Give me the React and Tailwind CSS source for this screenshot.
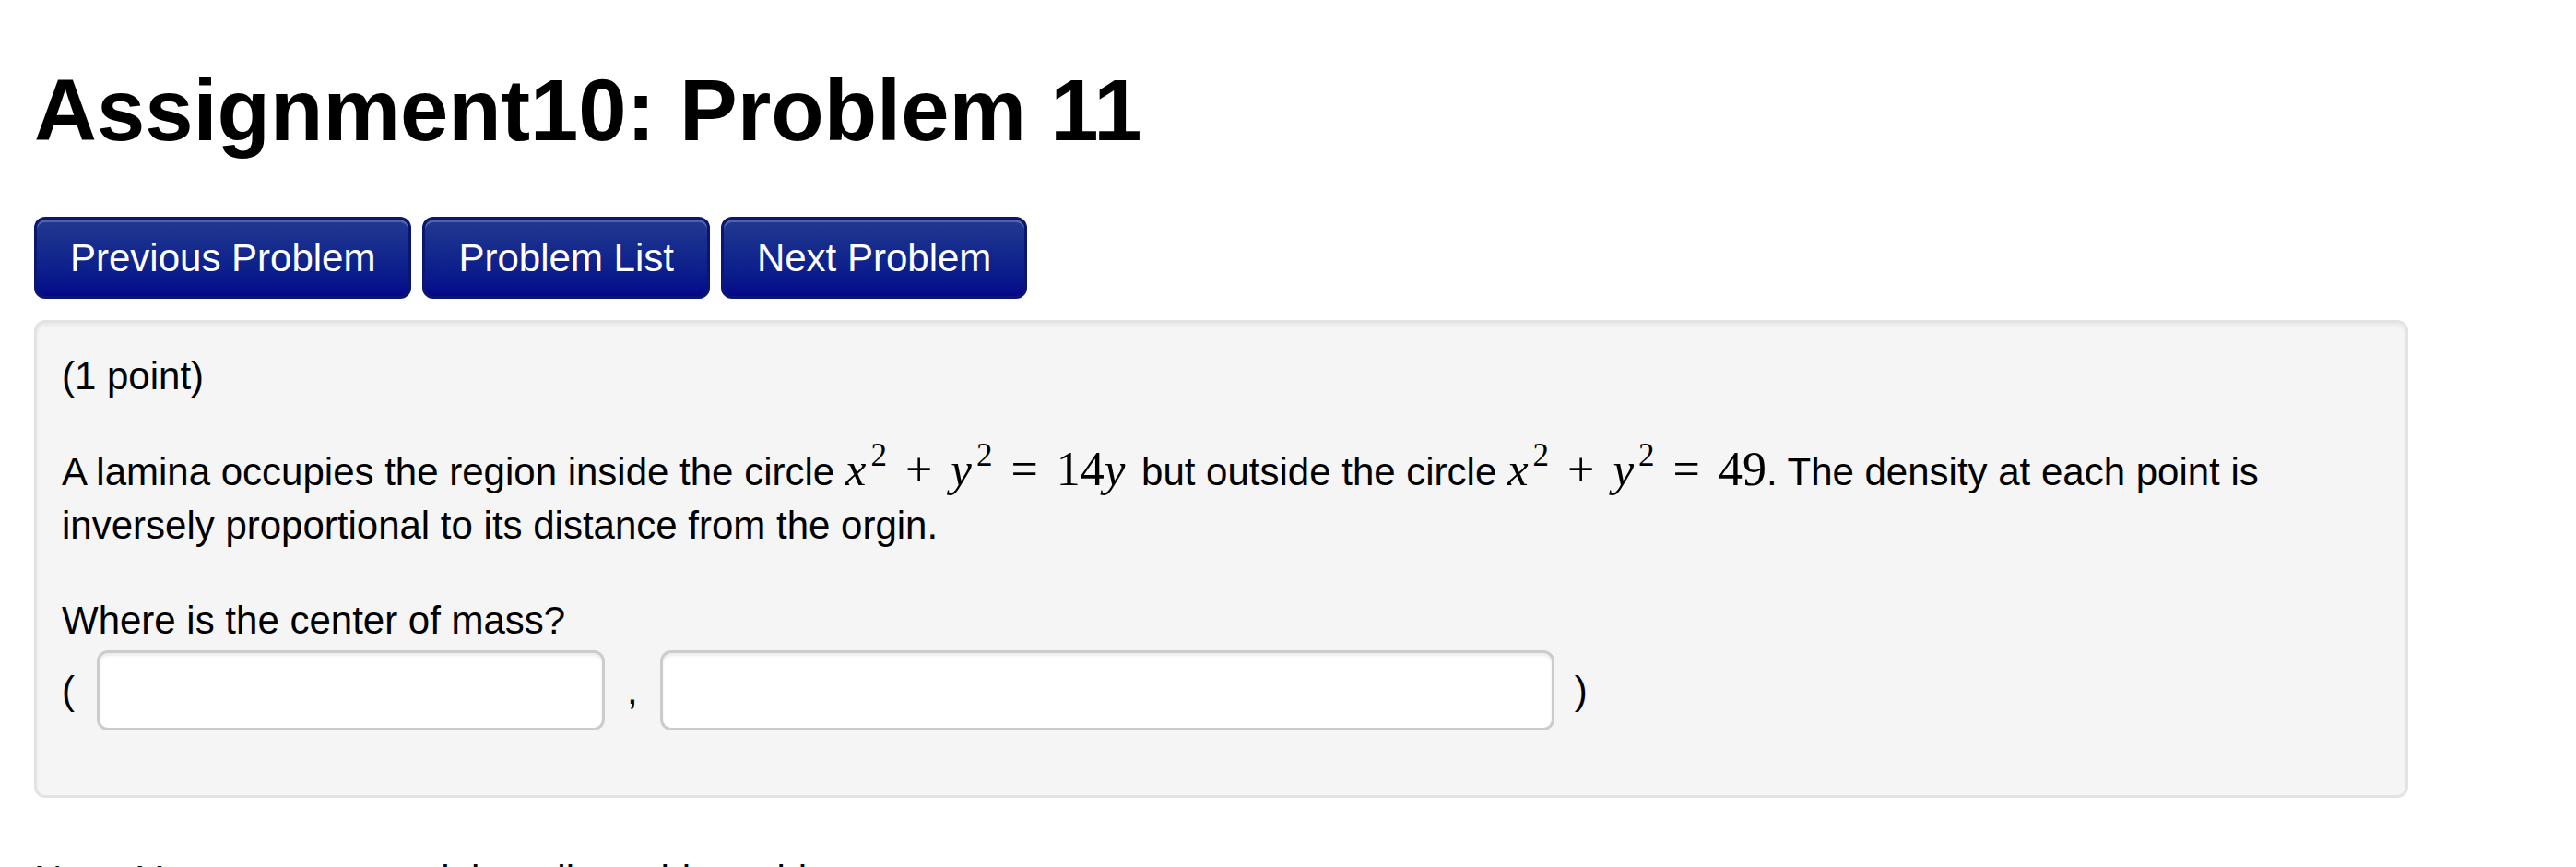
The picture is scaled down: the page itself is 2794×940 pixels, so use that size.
const serif = "font-['Liberation_Serif','Times_New_Roman',serif]"

function V({ children, className = '' }) {
  return <span className={`${serif} italic text-[51px] leading-none ${className}`}>{children}</span>
}

function Sup({ children }) {
  return (
    <span className={`${serif} relative -top-[21px] ml-[5px] text-[35px] leading-none`}>{children}</span>
  )
}

function Op({ children }) {
  return <span className={`${serif} mx-[20px] text-[52px] leading-none`}>{children}</span>
}

function Num({ children }) {
  return <span className={`${serif} text-[52px] leading-none`}>{children}</span>
}

function NavButton({ children }) {
  return (
    <button className="flex h-[89px] items-center rounded-[12px] border-[3px] border-[#0b1670] bg-linear-to-b from-[#22388f] to-[#06068a] px-[36px] text-[42px] leading-[60px] text-white shadow-[inset_0_3px_0_rgba(255,255,255,0.22)]">
      {children}
    </button>
  )
}

export default function App() {
  return (
    <div className="min-h-screen bg-white pl-[37px] pt-[70px] font-['Liberation_Sans',Arial,sans-serif] text-black">
      <h1 className="text-[94px] font-bold leading-[100px]">Assignment10: Problem 11</h1>

      <div className="mt-[65px] flex gap-[12px]">
        <NavButton>Previous Problem</NavButton>
        <NavButton>Problem List</NavButton>
        <NavButton>Next Problem</NavButton>
      </div>

      <div className="mt-[23px] w-[2575px] rounded-[12px] border-[3px] border-[#e3e3e3] bg-[#f5f5f5] pb-[70px] pl-[27px] pt-[29px] text-[42px] leading-[58px] shadow-[inset_0_3px_3px_rgba(0,0,0,0.05)]">
        <div>(1 point)</div>

        <div className="mt-[46px]">
          A lamina occupies the region inside the circle{' '}
          <V>x</V>
          <Sup>2</Sup>
          <Op>+</Op>
          <V>y</V>
          <Sup>2</Sup>
          <Op>=</Op>
          <Num>14</Num>
          <V className="mr-[6px]">y</V> but outside the circle <V>x</V>
          <Sup>2</Sup>
          <Op>+</Op>
          <V>y</V>
          <Sup>2</Sup>
          <Op>=</Op>
          <Num>49</Num>. The density at each point is
          <br />
          inversely proportional to its distance from the orgin.
        </div>

        <div className="mt-[45px]">Where is the center of mass?</div>

        <div className="mt-[3px] flex items-center">
          <span>(</span>
          <input
            type="text"
            className="ml-[24px] h-[87px] w-[551px] rounded-[12px] border-[3px] border-[#cccccc] bg-white shadow-[inset_0_3px_3px_rgba(0,0,0,0.075)] outline-none"
          />
          <span className="mx-[24px]">,</span>
          <input
            type="text"
            className="h-[87px] w-[970px] rounded-[12px] border-[3px] border-[#cccccc] bg-white shadow-[inset_0_3px_3px_rgba(0,0,0,0.075)] outline-none"
          />
          <span className="ml-[22px]">)</span>
        </div>
      </div>

      <div className="mt-[60px] text-[42px] leading-[58px]">
        Note: You can earn partial credit on this problem.
      </div>
    </div>
  )
}
